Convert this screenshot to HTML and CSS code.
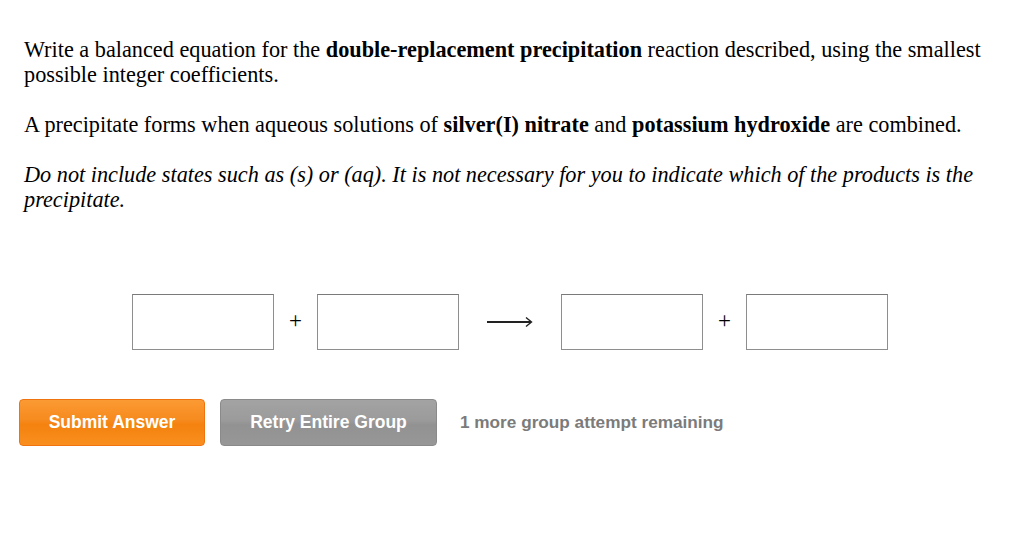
FILE: index.html
```html
<!DOCTYPE html>
<html lang="en">
<head>
  <meta charset="UTF-8">
  <meta name="viewport" content="width=device-width, initial-scale=1.0">
  <title>Question</title>
  <link rel="stylesheet" href="styles.css">
</head>
<body>
  <!-- Question text -->
  <div class="question">
    <p>Write a balanced equation for the <b>double-replacement precipitation</b> reaction described, using the smallest possible integer coefficients.</p>
    <p>A precipitate forms when aqueous solutions of <b>silver(I) nitrate</b> and <b>potassium hydroxide</b> are combined.</p>
    <p class="note">Do not include states such as (s) or (aq). It is not necessary for you to indicate which of the products is the precipitate.</p>
  </div>

  <!-- Equation inputs -->
  <div class="equation">
    <input type="text" class="slot">
    <span class="op">+</span>
    <input type="text" class="slot">
    <span class="arrow">
      <svg width="46" height="12" viewBox="0 0 46 12">
        <line x1="0" y1="6" x2="44" y2="6" stroke="#222" stroke-width="1.8"/>
        <polyline points="39,1.5 44.5,6 39,10.5" fill="none" stroke="#222" stroke-width="1.4"/>
      </svg>
    </span>
    <input type="text" class="slot">
    <span class="op">+</span>
    <input type="text" class="slot">
  </div>

  <!-- Actions -->
  <div class="actions">
    <button class="btn btn-submit">Submit Answer</button>
    <button class="btn btn-retry">Retry Entire Group</button>
    <span class="attempts">1 more group attempt remaining</span>
  </div>
</body>
</html>
```

FILE: styles.css
```css
/* General styling */
body {
  margin: 0;
  padding: 37px 24px 0 24px;
  background-color: #fff;
  color: #000;
  font-family: 'Liberation Serif', 'Times New Roman', serif;
  font-size: 22.25px;
}

/* Question text */
.question p {
  margin: 0 0 25px 0;
  line-height: 25px;
}

.question .note {
  font-style: italic;
  margin-bottom: 0;
}

/* Equation row */
.equation {
  display: flex;
  align-items: center;
  margin-top: 82px;
  margin-left: 108px;
}

.slot {
  box-sizing: border-box;
  width: 142px;
  height: 56px;
  margin: 0;
  padding: 0 6px;
  border: 1px solid #8e8e8e;
  border-top-color: #7a7a7a;
  border-radius: 0;
  background: #fff;
  font-size: 18px;
}

.op {
  width: 43px;
  text-align: center;
  font-size: 23px;
  line-height: 22px;
  margin-top: -2px;
}

.arrow {
  width: 102px;
  display: flex;
  justify-content: center;
}

/* Buttons */
.actions {
  display: flex;
  align-items: center;
  margin-top: 49px;
  margin-left: -5px;
}

.btn {
  box-sizing: border-box;
  height: 47px;
  margin: 0 15px 0 0;
  padding: 0;
  border-radius: 4px;
  font-family: 'Liberation Sans', Arial, sans-serif;
  font-size: 17.5px;
  font-weight: bold;
  color: #fff;
  cursor: pointer;
}

.btn-submit {
  width: 186px;
  border: 1px solid #ef7410;
  background: linear-gradient(#fb9a33, #f68a1e 45%, #f4820f 55%, #f98f1f);
}

.btn-retry {
  width: 217px;
  margin-right: 23px;
  border: 1px solid #8a8a8a;
  background: linear-gradient(#a3a3a3, #9b9b9b 45%, #929292 55%, #979797);
}

.attempts {
  font-family: 'Liberation Sans', Arial, sans-serif;
  font-size: 17.2px;
  font-weight: bold;
  color: #7b7b7b;
}
```
